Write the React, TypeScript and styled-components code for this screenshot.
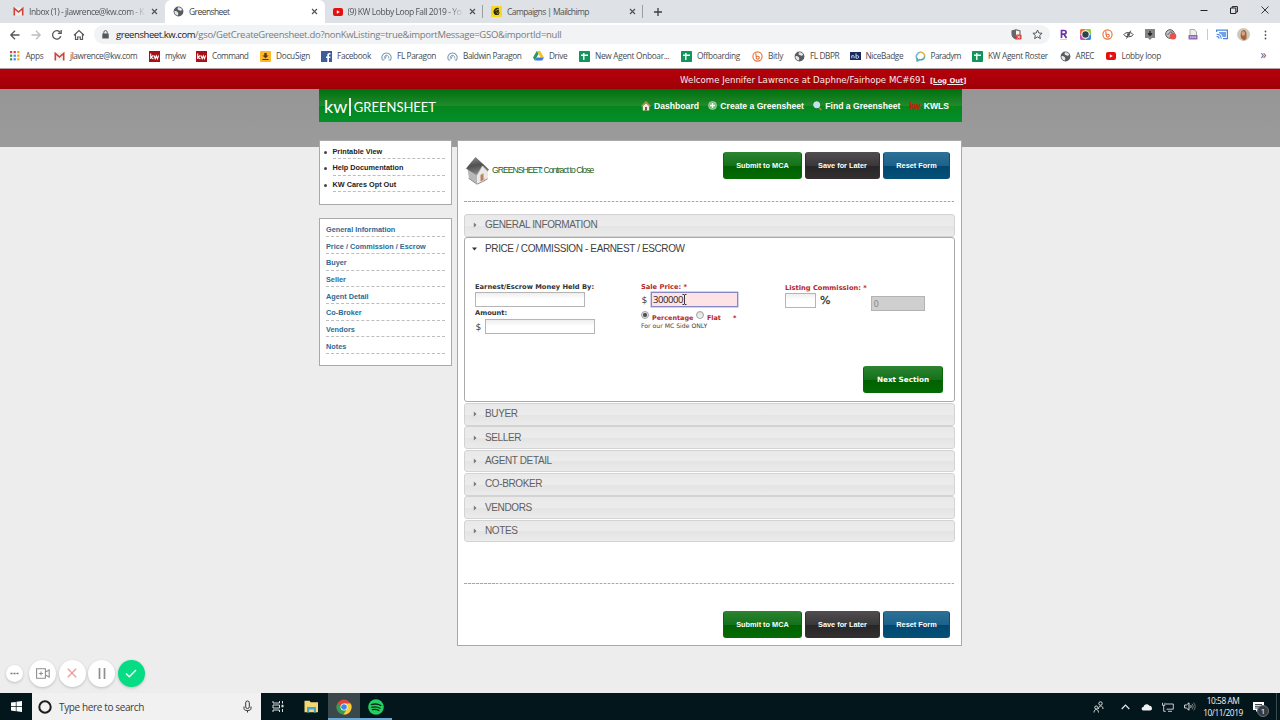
import React from 'react';
import styled, { createGlobalStyle, css } from 'styled-components';

const UI = "'Open Sans', 'Noto Sans', sans-serif";
const ARIAL = "'Liberation Sans', Arial, sans-serif";
const VERDANA = "'DejaVu Sans', Verdana, sans-serif";

const Global = createGlobalStyle`
  * { box-sizing: border-box; }
  html, body { margin: 0; padding: 0; }
  body { width: 1280px; height: 720px; overflow: hidden; background: #ededed; font-family: ${ARIAL}; }
  a { color: inherit; text-decoration: none; }
  svg { display: block; flex: none; }
`;

/* ---------- window frame ---------- */
const Screen = styled.div`
  width: 1280px; height: 720px; display: flex; flex-direction: column; overflow: hidden; position: relative;
`;
const TabStrip = styled.div`
  height: 23px; flex: none; display: flex; background: #dee1e6; font-family: ${UI};
`;
const Tab = styled.div<{ $w: number; $pad?: number; $active?: boolean; $sep?: boolean }>`
  width: ${p => p.$w}px; height: 23px; display: flex; align-items: center; padding: 0 7px 0 ${p => p.$pad ?? 8}px; gap: 5px;
  color: ${p => (p.$active ? '#3f4247' : '#505458')};
  position: relative;
  ${p => p.$active && css`background: #fff; border-radius: 6px 6px 0 0;`}
  ${p => p.$sep && css`&::after { content: ''; position: absolute; right: 0; top: 5px; height: 13px; width: 1px; background: #9a9da2; }`}
`;
const TabTitle = styled.span<{ $ls: number; $fade?: boolean }>`
  flex: 1; font-size: 8.5px; line-height: 12px; letter-spacing: ${p => p.$ls}px; white-space: nowrap;
  ${p => p.$fade && css`-webkit-mask-image: linear-gradient(90deg, #000 calc(100% - 16px), transparent);`}
`;
const WindowButtons = styled.div`
  margin-left: auto; display: flex; align-items: center; gap: 22.5px; padding: 0 11.5px 4px 0;
`;
const Toolbar = styled.div`
  height: 23px; flex: none; display: flex; align-items: center; background: #fff; font-family: ${UI};
`;
const NavIcons = styled.div`
  width: 94px; flex: none; display: flex; gap: 9.4px; padding-left: 8.5px;
`;
const Omnibox = styled.div`
  width: 956px; height: 19px; flex: none; border-radius: 10px; background: #f1f3f4; display: flex; align-items: center; padding: 0 7px 0 8px;
`;
const Url = styled.span`
  margin-left: 7px; flex: 1; font-size: 9.5px; line-height: 14px; color: #777c80; white-space: nowrap; letter-spacing: -0.28px;
  b { font-weight: 400; color: #202124; letter-spacing: -0.43px; }
`;
const OmniIcons = styled.div`display: flex; gap: 10px;`;
const Extensions = styled.div`flex: 1; display: flex; align-items: center; padding-left: 3.6px;`;
const ExtSlot = styled.span<{ $narrow?: boolean }>`
  width: ${p => (p.$narrow ? 8.4 : 21.4)}px; flex: none; display: flex; justify-content: center;
`;
const ExtDivider = styled.span`width: 1px; height: 11px; background: #c8cacc;`;
const Bookmarks = styled.div`
  height: 22px; flex: none; display: flex; align-items: center; background: #fff; padding: 0 0 2px 9.5px; font-family: ${UI};
`;
const Bookmark = styled.a<{ $w: number }>`
  width: ${p => p.$w}px; flex: none; display: flex; align-items: center; white-space: nowrap; color: #484b4f;
`;
const BookmarkIcon = styled.span`width: 16px; flex: none; display: flex;`;
const BookmarkText = styled.span<{ $ls: number }>`font-size: 8.3px; line-height: 12px; letter-spacing: ${p => p.$ls}px;`;
const MoreMark = styled.span`font-size: 12px; line-height: 12px; color: #55585c; padding-bottom: 2px;`;

/* ---------- site ---------- */
const Page = styled.div`
  height: 625px; flex: none; background: linear-gradient(#949494, #9b9b9b) 0 0 / 100% 78px no-repeat #ededed;
  border-top: 1px solid #b0a3a3;
`;
const WelcomeBar = styled.div`
  height: 20px; background: linear-gradient(#7d1515 0 1px, #b4000a 1px, #a00008); display: flex; justify-content: flex-end; align-items: center; padding: 2px 313.5px 0 0;
  font-family: ${VERDANA}; color: #f8eaea; white-space: nowrap;
`;
const Welcome = styled.span`font-size: 8.6px; line-height: 12px;`;
const LogOut = styled.a`font-size: 6.85px; line-height: 12px; font-weight: 700; margin-left: 4px; padding-top: 1px; span { text-decoration: underline; }`;
const Container = styled.div`width: 643px; margin-left: 319px;`;
const Header = styled.div`
  height: 33px; display: flex; align-items: center; justify-content: space-between; padding: 0 13px 0 5px; color: #fff;
  background: linear-gradient(#00700e 0, #1f8a2c 50%, #06841c 51%, #039029 100%);
`;
const Logo = styled.div`
  display: flex; align-items: center; font-family: Lato, sans-serif; white-space: nowrap; color: #fff; padding-top: 1px;
`;
const LogoKw = styled.span`font-size: 18px; line-height: 20px;`;
const LogoBar = styled.span`width: 1.5px; height: 18px; background: #e8f3e8; margin: 2px 3px 0 2px;`;
const LogoName = styled.span`font-size: 13px; line-height: 20px; padding-top: 2px;`;
const HeaderNav = styled.div`display: flex; align-items: center; gap: 9.2px;`;
const HeaderLink = styled.a`
  display: flex; align-items: center; gap: 3.2px; font-size: 8.6px; line-height: 12px; font-weight: 700; white-space: nowrap;
`;
const KwTiny = styled.span`color: #c4200c; font-size: 8.5px; width: 11px; letter-spacing: -0.5px; text-shadow: 0 0 1px #b3260c;`;
const Columns = styled.div`display: flex; align-items: flex-start; gap: 5px; margin-top: 18px;`;
const Side = styled.div`width: 133px; flex: none; display: flex; flex-direction: column; gap: 13px;`;
const SidePanel = styled.div<{ $h: number; $links?: boolean }>`
  height: ${p => p.$h}px; background: #fff; border: 1px solid #a9a9a9; padding: ${p => (p.$links ? '1.8px 6px 0 6px' : '1.5px 6px 0 12.5px')};
  color: ${p => (p.$links ? '#2d6a94' : '#222')};
`;
const SideItem = styled.a<{ $bullet?: boolean }>`
  height: 16.65px; display: flex; align-items: center; font-size: 7.3px; line-height: 10px; font-weight: 700; white-space: nowrap; position: relative;
  border-bottom: 1px dashed #bdbdbd; padding-top: 3px;
  ${p => p.$bullet && css`&::before { content: ''; position: absolute; left: -9px; top: 8px; width: 3px; height: 3px; border-radius: 50%; background: #444; }`}
`;
const Main = styled.div`
  width: 505px; height: 506px; background: #fff; border: 1px solid #a9a9a9; padding: 0 6px 0 6px; display: flex; flex-direction: column;
`;
const TitleRow = styled.div`height: 60px; flex: none; display: flex; align-items: center; padding: 0 5px 11px 2px;`;
const FormTitle = styled.h1`
  margin: 9px 0 0 3px; flex: 1; font-size: 8.6px; line-height: 12px; font-weight: 400; letter-spacing: -0.97px; color: #17601c; white-space: nowrap;
`;
const HouseMark = styled.span`margin-top: 10px;`;
const Buttons = styled.div`display: flex; gap: 3px;`;
const tones = {
  green: ['#2b8230', '#14721a', '#006000', '#046b04'],
  dark: ['#4f4b4e', '#3b383a', '#272526', '#332f31'],
  blue: ['#2c7096', '#1c628c', '#00476f', '#055077'],
};
const Button = styled.button<{ $tone: keyof typeof tones; $w: number; $verdana?: boolean }>`
  width: ${p => p.$w}px; height: 27px; padding: 0; border: 1px solid ${p => tones[p.$tone][3]}; border-top-color: ${p => tones[p.$tone][0]}; border-radius: 3px;
  background: linear-gradient(${p => tones[p.$tone][0]}, ${p => tones[p.$tone][1]} 50%, ${p => tones[p.$tone][2]} 52%, ${p => tones[p.$tone][3]});
  color: #fff; font-weight: 700; font-family: ${p => (p.$verdana ? VERDANA : ARIAL)}; font-size: ${p => (p.$verdana ? 7.25 : 7.35)}px; line-height: 10px; white-space: nowrap;
`;
const Rule = styled.div`height: 1px; flex: none; margin-right: 1px; background: repeating-linear-gradient(90deg, #a5a5a5 0 2.5px, #e8e8e8 2.5px 4px);`;
const Accordion = styled.div`height: 381px; flex: none; padding-top: 12px;`;
const Section = styled.div`
  height: 22.6px; margin-bottom: 0.75px; border: 1px solid #d3d3d3; border-radius: 3px; display: flex; align-items: center; padding-left: 7px;
  background: linear-gradient(#e9e9e9, #ececec 50%, #e4e4e4 52%, #ebebeb); color: #606060;
`;
const OpenSection = styled.div`
  height: 165px; margin: 0.5px 0 0.6px; border: 1px solid #aaa; border-radius: 3px; background: #fff; display: flex; flex-direction: column;
`;
const OpenHead = styled.div`height: 21px; flex: none; display: flex; align-items: center; padding-left: 7px; color: #404040;`;
const SectionTitle = styled.span`font-size: 10px; letter-spacing: -0.38px; line-height: 12px; margin-left: 8px; white-space: nowrap;`;
const Fields = styled.div`
  height: 107px; flex: none; display: grid; grid-template-columns: 166px 144px 86px 60px; padding: 22px 0 0 10px; align-items: start;
`;
const Field = styled.div<{ $top?: number }>`display: flex; flex-direction: column; align-items: flex-start; padding-top: ${p => p.$top ?? 0}px;`;
const Label = styled.label<{ $req?: boolean; $h?: number }>`
  font-family: ${VERDANA}; font-weight: 700; font-size: 6.7px; line-height: ${p => (p.$h ?? 11) + 1.5}px; height: ${p => p.$h ?? 11}px; white-space: nowrap;
  color: ${p => (p.$req ? '#b4262a' : '#333')};
`;
const InputRow = styled.div`display: flex; align-items: center; height: 15px; font-family: ${VERDANA}; color: #333;`;
const Sign = styled.span`font-size: 9px; width: 9.5px; line-height: 12px; padding-left: .5px;`;
const Percent = styled.span`font-size: 11px; line-height: 12px; margin-left: 4px; -webkit-text-stroke: .3px #333;`;
const Box = styled.span<{ $w: number; $kind?: 'focus' | 'off' }>`
  width: ${p => p.$w}px; height: 15px; display: flex; align-items: center; padding-left: 1.5px; border: 1px solid #b5b5b5; font-family: ${UI}; font-size: 9.5px; line-height: 12px; color: #333;
  background: linear-gradient(#eee, #fff 45%);
  position: relative;
  ${p => p.$kind === 'focus' && css`background: #fde3e3; border-color: #8787c8; color: #2c2024; letter-spacing: -0.43px; box-shadow: 0 0 0 .5px #a5a5d8;`}
  ${p => p.$kind === 'off' && css`background: #cfcfcf; border-color: #b3b3b3; color: #8a8a8a; font-family: ${VERDANA}; font-size: 8.5px;`}
`;
const Cursor = styled.span`position: absolute; left: 30px; top: 1px;`;
const RadioRow = styled.div`display: flex; align-items: center; height: 10px; margin-top: 4px; width: 100px;`;
const Radio = styled.span<{ $on?: boolean; $l?: number }>`
  width: 8px; height: 8px; flex: none; border-radius: 50%; border: 1px solid #a2a2a2; background: ${p => (p.$on ? 'radial-gradient(#555 0 1.8px, #e6e6e6 2.4px)' : 'linear-gradient(#ddd, #f4f4f4)')}; margin: 0 0 3px ${p => p.$l ?? 0}px;
`;
const RadioText = styled.span<{ $l: number }>`
  font-family: ${VERDANA}; font-weight: 700; font-size: 6.45px; line-height: 10px; color: #b4262a; margin: 3px 0 0 ${p => p.$l}px; white-space: nowrap;
`;
const Hint = styled.span`font-family: ${VERDANA}; font-size: 6.15px; line-height: 9px; color: #444; white-space: nowrap;`;
const NextRow = styled.div`display: flex; justify-content: flex-end; padding-right: 11px;`;
const BottomButtons = styled.div`display: flex; justify-content: flex-end; padding: 27px 5px 0 0;`;

/* ---------- recorder + taskbar ---------- */
const Recorder = styled.div`position: absolute; left: 6px; top: 659.5px; display: flex; align-items: center; gap: 1.4px;`;
const Round = styled.span<{ $s: number; $go?: boolean }>`
  width: ${p => p.$s}px; height: ${p => p.$s}px; border-radius: 50%; display: flex; align-items: center; justify-content: center;
  background: ${p => (p.$go ? '#05dc84' : '#fff')}; margin: 0 1px 0 0; box-shadow: 0 1px 3px rgba(0,0,0,.2);
  &:first-child { margin-right: 5px; }
`;
const Taskbar = styled.div`height: 27px; flex: none; background: #03161b; display: flex; font-family: ${UI};`;
const Task = styled.span<{ $w: number; $active?: boolean; $run?: boolean }>`
  width: ${p => p.$w}px; height: 27px; flex: none; display: flex; align-items: center; justify-content: center;
  background: ${p => (p.$active ? '#3a484c' : 'transparent')};
  ${p => p.$run && css`border-bottom: 2px solid #6aa9d6; padding-top: 2px;`}
`;
const Search = styled.div`
  width: 229px; flex: none; background: #f1f1f1; display: flex; align-items: center; padding: 0 9px 0 6px; font-size: 10px; letter-spacing: -0.37px; color: #3c3c3c;
  span { flex: 1; margin-left: 7px; white-space: nowrap; line-height: 14px; }
`;
const Tray = styled.div`margin-left: auto; display: flex; align-items: center; padding-right: 3px; color: #fff;`;
const Slot = styled.span<{ $w: number }>`width: ${p => p.$w}px; display: flex; justify-content: center; position: relative;`;
const Clock = styled.div`
  width: 50px; font-size: 8.3px; line-height: 12px; text-align: center; color: #f2f2f2; white-space: nowrap; letter-spacing: -0.45px;
`;
const CountBadge = styled.span`
  position: absolute; left: 9px; top: 3px; width: 12px; height: 12px; border-radius: 50%; background: #343b3e; border: 1px solid #6b7275; font-size: 8px; line-height: 10px; text-align: center; color: #fff;
`;
const ShowDesktop = styled.span`width: 1px; height: 27px; margin-left: 8px; background: #3b4a4e;`;

/* ---------- icons ---------- */
const Gmail = () => (
  <svg width="11" height="9" viewBox="0 0 11 9"><path d="M1 0.5h9v8H1z" fill="#f3efef" /><path d="M1.3 8.5V1.4L5.5 5l4.2-3.6v7.1" fill="none" stroke="#c9453a" strokeWidth="1.6" /></svg>
);
const Globe = () => (
  <svg width="11" height="11" viewBox="0 0 11 11"><circle cx="5.5" cy="5.5" r="4.9" fill="#585c60" /><path d="M1.4 5.2c1.5-.6 2.6.2 3.4 1 .8.9.4 2 .1 3.3C2.6 9.3 1.3 7.5 1.4 5.2zM5 1.4c1.6-.5 3.6.7 4.3 2.5-1 .5-2 1.2-3 .4C5.3 3.6 3.8 3.3 5 1.4z" fill="#e4e6e8" /></svg>
);
const YouTube = () => (
  <svg width="10" height="8" viewBox="0 0 10 8"><rect width="10" height="8" rx="2" fill="#e60f0f" /><path d="M3.8 2.3v3.4L6.8 4z" fill="#fff" /></svg>
);
const Chimp = () => (
  <svg width="11" height="11" viewBox="0 0 11 11"><rect width="11" height="11" rx="1" fill="#f5da1d" /><path d="M7.9 2.2C5.400 1 2.500 2.900 2.500 5.900c0 2.900 2.900 4 5.400 2.600l.8-1.900-1-.5.6-1.500-.9-.9z" fill="#2e2a1e" /><path d="M4.900 5.200c.2-1.300 1.200-1.900 2.400-1.500M5.600 6.800c.7.600 1.300.5 2 0" stroke="#f5da1d" fill="none" strokeWidth=".8" /></svg>
);
const Close = () => (
  <svg width="7" height="7" viewBox="0 0 7 7"><path d="M1 1l5 5M6 1L1 6" stroke="#4d5156" strokeWidth="1.1" /></svg>
);
const KwIcon = () => (
  <svg width="11" height="11" viewBox="0 0 11 11"><rect width="11" height="11" fill="#a80f16" /><path d="M1.700 2.500v5.500M4.300 4.500L2 6.100 4.400 8M5 4.500l1.200 3.200 1.100-2.900 1.100 2.900 1.200-3.200" stroke="#fff" fill="none" strokeWidth="1.100" /></svg>
);
const dotColors = ['#db4437', '#db4437', '#f0a020', '#3f8f58', '#4285f4', '#f0a020', '#3f8f58', '#4285f4', '#e8b020'];
const AppsIcon = () => (
  <svg width="10" height="10" viewBox="0 0 10 10">
    {dotColors.map((c, i) => <rect key={i} x={(i % 3) * 3.6} y={Math.floor(i / 3) * 3.6} width="2.2" height="2.2" fill={c} />)}
  </svg>
);
const DocuSign = () => (
  <svg width="11" height="11" viewBox="0 0 11 11"><rect width="11" height="11" rx="1" fill="#fbb829" /><path d="M4.300 2h2.400v2.600H8.600L5.500 7.200 2.400 4.600h1.900zM2.400 8h6.200v1H2.400z" fill="#5a3410" /></svg>
);
const Facebook = () => (
  <svg width="11" height="11" viewBox="0 0 11 11"><rect width="11" height="11" fill="#3f5b9a" /><path d="M6.300 11V7H5V5.400h1.300V4.200C6.300 2.800 7 2 8.300 2h1.200v1.600h-.8c-.5 0-.7.200-.7.700v1.100h1.500L9.300 7H8v4z" fill="#fff" /></svg>
);
const Paragon = () => (
  <svg width="11" height="9" viewBox="0 0 11 9"><path d="M1.500 8C-.3 4.500 2 1 5.500 1S11.300 4.500 9.500 8L7.600 8M1.500 8h2" fill="none" stroke="#75a3b0" strokeWidth="1.1" /><path d="M3.300 6.500C3 4.600 4 3.300 5.500 3.300s2.500 1.300 2.200 3.200M5.500 3.500L4 7" fill="none" stroke="#7d8fa6" strokeWidth=".9" /></svg>
);
const Drive = () => (
  <svg width="11" height="10" viewBox="0 0 11 10"><path d="M3.800 0h3.400L11 6.500H7.600z" fill="#f2c230" /><path d="M3.800 0L0 6.500 1.800 9.600 5.500 3z" fill="#269b60" /><path d="M3.600 6.500H11L9.200 9.600H1.800z" fill="#4179dd" /></svg>
);
const Sheet = () => (
  <svg width="11" height="11" viewBox="0 0 11 11"><rect width="11" height="11" rx=".8" fill="#12955b" /><path d="M2 4.200h7M4.800 2v7" stroke="#fff" strokeWidth="1.4" /></svg>
);
const BitlyIcon = () => (
  <svg width="11" height="11" viewBox="0 0 11 11"><circle cx="5.5" cy="5.5" r="4.6" fill="#fff" stroke="#e5703b" strokeWidth="1.1" /><path d="M3.800 2.300l.6 5.200M4.200 6.300c.7-1.500 3.200-1.400 3.100.4-.1 1.700-2.300 1.800-2.900.6" fill="none" stroke="#e5703b" strokeWidth="1.1" /></svg>
);
const NiceBadge = () => (
  <svg width="11" height="8" viewBox="0 0 11 8"><rect width="11" height="8" fill="#172b5f" /><path d="M1.800 6.300V3.500M1.800 4.200c.6-1 2.300-.9 2.300.3v1.800M6 1.300v5M6 4.200c.8-1 2.700-.7 2.700.7S6.800 6.800 6 5.800" stroke="#dfe5f2" fill="none" strokeWidth=".9" /></svg>
);
const ParadymIcon = () => (
  <svg width="11" height="11" viewBox="0 0 11 11"><path d="M2 8.500C.2 5 2.300 1.300 5.500 1.300" fill="none" stroke="#6fb6d8" strokeWidth="1.6" /><path d="M5 1.300c3-.3 5 2 4.600 4.500" fill="none" stroke="#e0b83c" strokeWidth="1.6" /><path d="M9.600 5.500C9.300 8 7 9.300 4.700 8.600L2.200 10V7" fill="none" stroke="#45a9a8" strokeWidth="1.5" /></svg>
);
const House = () => (
  <svg width="10" height="10" viewBox="0 0 10 10"><path d="M1.800 5v4.500h6.400V5L5 2.200z" fill="#efe9e0" /><path d="M.5 5.500L5 1l4.500 4.500" stroke="#c48a5a" strokeWidth="1.3" fill="none" /><path d="M4 6h2v3.500H4z" fill="#7d5a3c" /></svg>
);
const Plus = () => (
  <svg width="9" height="9" viewBox="0 0 9 9"><circle cx="4.5" cy="4.5" r="4" fill="#78b878" stroke="#b5dcb5" strokeWidth=".7" /><path d="M4.500 2v5M2 4.500h5" stroke="#fff" strokeWidth="1.4" /></svg>
);
const Lens = () => (
  <svg width="9" height="10" viewBox="0 0 9 10"><path d="M5.500 6l2.800 3" stroke="#b98245" strokeWidth="1.6" /><circle cx="3.7" cy="3.8" r="3" fill="#bfe0f7" stroke="#d4e6ee" strokeWidth="1" /></svg>
);
const BigHouse = () => (
  <svg width="23" height="28" viewBox="0 0 23 28">
    <defs><linearGradient id="roof" x1=".3" y1="0" x2=".5" y2="1"><stop offset="0" stopColor="#8a8a8a" /><stop offset=".45" stopColor="#505050" /><stop offset="1" stopColor="#8e8e8e" /></linearGradient></defs>
    <path d="M1.500 12L3 21.500 11 27V17z" fill="#b8b8b8" /><path d="M11 17l6-9 5 6v8L11 27z" fill="#ebe8e5" />
    <path d="M9.500 0L0 11.500l11 7L16.500 9l5 5.500 1.500-2z" fill="url(#roof)" />
    <path d="M11 18L16.500 9l4.700 5" fill="none" stroke="#cfcfcf" strokeWidth=".8" />
    <path d="M14.500 18l3-1.700v6.700l-3 1.500z" fill="#b9805a" /><path d="M17 18l1.500 5.500" stroke="#e3b48e" strokeWidth="1" /><path d="M2.500 21.200l8.500 6 6-2.700 4.500-2.700" stroke="#777" strokeWidth=".8" fill="none" />
  </svg>
);
const Caret = ({ open }: { open?: boolean }) => (
  <svg width="5" height="6" viewBox="0 0 5 6"><path d={open ? 'M0 1.500h5L2.500 4.500z' : 'M1.800 .5v5l2.700-2.500z'} fill={open ? '#333' : '#777'} /></svg>
);

const bookmarks: [string, number, () => React.ReactElement, number][] = [
  ['Apps', 44.5, AppsIcon, -0.42], ['jlawrence@kw.com', 95, Gmail, -0.42], ['mykw', 47, KwIcon, -0.5], ['Command', 64, KwIcon, -0.58],
  ['DocuSign', 61, DocuSign, -0.29], ['Facebook', 60, Facebook, -0.37], ['FL Paragon', 66, Paragon, -0.4], ['Baldwin Paragon', 86, Paragon, -0.44],
  ['Drive', 46, Drive, -0.4], ['New Agent Onboar...', 102, Sheet, -0.31], ['Offboarding', 71, Sheet, -0.37], ['Bitly', 42, BitlyIcon, -0.34],
  ['FL DBPR', 55.5, Globe, -0.43], ['NiceBadge', 65, NiceBadge, -0.38], ['Paradym', 57.5, ParadymIcon, -0.58], ['KW Agent Roster', 87.5, Sheet, -0.31],
  ['AREC', 46, Globe, -0.37], ['Lobby loop', 155, YouTube, -0.35],
];

const extensionIcons = [
  <svg width="10" height="11" viewBox="0 0 10 11"><path d="M2.500 9V1.500h2.700c2.500 0 2.500 3.700 0 3.700H3M5 5.200L7.500 9" fill="none" stroke="#6a32a8" strokeWidth="1.7" /><path d="M1 10.500h7" stroke="#c9b6dc" strokeWidth=".7" /></svg>,
  <svg width="11" height="11" viewBox="0 0 11 11"><path d="M1 0h4.500v5.500H0V1z" fill="#f0733c" /><path d="M5.500 0H10l1 1v4.500H5.500z" fill="#9acb3c" /><path d="M0 5.500h5.500V11H1l-1-1z" fill="#c850b8" /><path d="M5.500 5.500H11V10l-1 1H5.500z" fill="#3889d9" /><circle cx="5.5" cy="5.5" r="4.2" fill="#fff" /><circle cx="5.5" cy="5.5" r="3.2" fill="#2e4446" /></svg>,
  <BitlyIcon />,
  <svg width="11" height="11" viewBox="0 0 11 11"><path d="M.8 5.700C2.500 2.800 8.500 2.800 10.200 5.700 8.500 8.400 2.500 8.400.8 5.700zM7.700 1.700L3.500 9.500" fill="none" stroke="#444" strokeWidth="1" /><circle cx="5.5" cy="5.5" r="1.5" fill="#555" /></svg>,
  <svg width="10" height="11" viewBox="0 0 10 11"><rect width="10" height="9" fill="#858585" /><path d="M3 9h4l-2 2z" fill="#858585" /><path d="M5 2v4M3 4.200L5 6.300l2-2.100" stroke="#222" strokeWidth="1.3" fill="none" /></svg>,
  <svg width="12" height="11" viewBox="0 0 12 11"><circle cx="5" cy="5" r="4.3" fill="#c3c6ca" stroke="#555" strokeWidth="1" /><path d="M2.500 6l3.500-3.500L8 5" stroke="#555" fill="none" /><circle cx="8" cy="7.3" r="3.3" fill="#e8534d" /></svg>,
  <svg width="10" height="11" viewBox="0 0 10 11"><path d="M2 .5h4.500L8.500 3v5H2z" fill="#eee" stroke="#999" strokeWidth=".8" /><rect x=".5" y="6" width="9" height="4.5" rx=".6" fill="#8f6ab0" /><path d="M2 8.200h6" stroke="#e4d8ee" strokeWidth="1.3" strokeDasharray="1.5 .7" /></svg>,
];

const ActionButtons = () => (
  <Buttons>
    <Button $tone="green" $w={79}>Submit to MCA</Button>
    <Button $tone="dark" $w={75}>Save for Later</Button>
    <Button $tone="blue" $w={67}>Reset Form</Button>
  </Buttons>
);

export default function App() {
  return (
    <Screen>
      <Global />
      <TabStrip>
        <Tab $w={165} $pad={13}><Gmail /><TabTitle $fade $ls={-0.46}>Inbox (1) - jlawrence@kw.com - K</TabTitle><Close /></Tab>
        <Tab $w={160} $active><Globe /><TabTitle $ls={-0.58}>Greensheet</TabTitle><Close /></Tab>
        <Tab $w={158} $pad={7.5} $sep><YouTube /><TabTitle $fade $ls={-0.44}>(9) KW Lobby Loop Fall 2019 - Yo</TabTitle><Close /></Tab>
        <Tab $w={160} $sep><Chimp /><TabTitle $ls={-0.58}>Campaigns | Mailchimp</TabTitle><Close /></Tab>
        <Tab $w={30} $pad={11}><svg width="8" height="8" viewBox="0 0 8 8"><path d="M4 0v8M0 4h8" stroke="#3c4043" strokeWidth="1.3" /></svg></Tab>
        <WindowButtons>
          <svg width="8" height="8" viewBox="0 0 8 8"><path d="M.5 4.500h7" stroke="#222" strokeWidth="1" /></svg>
          <svg width="8" height="8" viewBox="0 0 8 8"><path d="M.5 2h5.300v5.500H.5zM2.200 2V.6h5.200V6H6" fill="none" stroke="#222" strokeWidth="1" /></svg>
          <svg width="8" height="8" viewBox="0 0 8 8"><path d="M.5.5l7 7M7.500.5l-7 7" stroke="#222" strokeWidth=".9" /></svg>
        </WindowButtons>
      </TabStrip>
      <Toolbar>
        <NavIcons>
          <svg width="12" height="12" viewBox="0 0 12 12"><path d="M10.500 6H2M6 1.800L1.800 6 6 10.200" fill="none" stroke="#55585c" strokeWidth="1.3" /></svg>
          <svg width="12" height="12" viewBox="0 0 12 12"><path d="M1.500 6H10M6 1.800L10.200 6 6 10.200" fill="none" stroke="#bcbfc2" strokeWidth="1.3" /></svg>
          <svg width="12" height="12" viewBox="0 0 12 12"><path d="M9.800 7.200A4.200 4.200 0 1 1 9.200 3.400M10.200 1v3.300H6.900" fill="none" stroke="#55585c" strokeWidth="1.3" /></svg>
          <svg width="12" height="12" viewBox="0 0 12 12"><path d="M1 6.200L6 1.500l5 4.700M2.500 5.500v5H4.700V8h2.600v2.500h2.200v-5" fill="none" stroke="#55585c" strokeWidth="1.2" /></svg>
        </NavIcons>
        <Omnibox>
          <svg width="7" height="9" viewBox="0 0 7 9"><path d="M.3 3.500h6.400v5H.3z" fill="#55585c" /><path d="M1.800 3.800V2.300a1.700 1.700 0 0 1 3.400 0v1.500" fill="none" stroke="#55585c" strokeWidth="1" /></svg>
          <Url><b>greensheet.kw.com</b>/gso/GetCreateGreensheet.do?nonKwListing=true&amp;importMessage=GSO&amp;importId=null</Url>
          <OmniIcons>
            <svg width="11" height="11" viewBox="0 0 11 11"><path d="M5 .8L9 2v3c0 2.500-1.500 4-4 5-2.500-1-4-2.500-4-5V2z" fill="none" stroke="#666" strokeWidth="1.1" /><path d="M5 .8V10C2.500 9 1 7.500 1 5V2z" fill="#666" /><rect x="5" y="5.5" width="5.5" height="5" rx="1" fill="#d9453d" /><path d="M6.500 6.900l2.400 2.300M8.900 6.900L6.500 9.200" stroke="#fff" strokeWidth=".8" /></svg>
            <svg width="11" height="11" viewBox="0 0 11 11"><path d="M5.500 1l1.300 3 3.300.3-2.500 2.100.8 3.200-2.900-1.700-2.900 1.700.8-3.200L.9 4.300 4.200 4z" fill="none" stroke="#55585c" strokeWidth="1" /></svg>
          </OmniIcons>
        </Omnibox>
        <Extensions>
          {extensionIcons.map((icon, i) => <ExtSlot key={i}>{icon}</ExtSlot>)}
          <ExtSlot $narrow><ExtDivider /></ExtSlot>
          <ExtSlot><svg width="12" height="11" viewBox="0 0 12 11"><path d="M.6 3V1.200h10.800v8.500H7" fill="none" stroke="#4a86e0" strokeWidth="1.2" /><path d="M3 3h7v5H6.500C6 6 4.500 4.600 3 4.300z" fill="#6fa3ee" /><path d="M.6 5.200c2.700 0 4.600 1.900 4.600 4.600M.6 7.400c1.500 0 2.400 1 2.400 2.400" fill="none" stroke="#4a86e0" strokeWidth="1.1" /></svg></ExtSlot>
          <ExtSlot><svg width="13" height="13" viewBox="0 0 13 13"><circle cx="6.5" cy="6.5" r="6.5" fill="#cfc8b8" /><path d="M4 10c-1-4 .3-8 2.700-8S10 5 9.300 11l-2.500 1.500z" fill="#a5633b" /><ellipse cx="6.3" cy="5.5" rx="1.7" ry="2.3" fill="#dba583" /></svg></ExtSlot>
          <ExtSlot><svg width="3" height="10" viewBox="0 0 3 10"><circle cx="1.5" cy="1.5" r=".9" fill="#555" /><circle cx="1.5" cy="5" r=".9" fill="#555" /><circle cx="1.5" cy="8.5" r=".9" fill="#555" /></svg></ExtSlot>
        </Extensions>
      </Toolbar>
      <Bookmarks>
        {bookmarks.map(([name, w, Icon, ls]) => (
          <Bookmark key={name} $w={w}><BookmarkIcon><Icon /></BookmarkIcon><BookmarkText $ls={ls}>{name}</BookmarkText></Bookmark>
        ))}
        <MoreMark>»</MoreMark>
      </Bookmarks>

      <Page>
        <WelcomeBar>
          <Welcome>Welcome Jennifer Lawrence at Daphne/Fairhope MC#691</Welcome>
          <LogOut>[<span>Log Out</span>]</LogOut>
        </WelcomeBar>
        <Container>
          <Header>
            <Logo><LogoKw>kw</LogoKw><LogoBar /><LogoName>GREENSHEET</LogoName></Logo>
            <HeaderNav>
              <HeaderLink><House />Dashboard</HeaderLink>
              <HeaderLink><Plus />Create a Greensheet</HeaderLink>
              <HeaderLink><Lens />Find a Greensheet</HeaderLink>
              <HeaderLink><KwTiny>kw</KwTiny>KWLS</HeaderLink>
            </HeaderNav>
          </Header>
          <Columns>
            <Side>
              <SidePanel $h={65}>
                {['Printable View', 'Help Documentation', 'KW Cares Opt Out'].map(t => <SideItem key={t} $bullet>{t}</SideItem>)}
              </SidePanel>
              <SidePanel $h={148} $links>
                {['General Information', 'Price / Commission / Escrow', 'Buyer', 'Seller', 'Agent Detail', 'Co-Broker', 'Vendors', 'Notes'].map(t => <SideItem key={t}>{t}</SideItem>)}
              </SidePanel>
            </Side>
            <Main>
              <TitleRow><HouseMark><BigHouse /></HouseMark><FormTitle>GREENSHEET: Contract to Close</FormTitle><ActionButtons /></TitleRow>
              <Rule />
              <Accordion>
                <Section><Caret /><SectionTitle>GENERAL INFORMATION</SectionTitle></Section>
                <OpenSection>
                  <OpenHead><Caret open /><SectionTitle>PRICE / COMMISSION - EARNEST / ESCROW</SectionTitle></OpenHead>
                  <Fields>
                    <Field>
                      <Label>Earnest/Escrow Money Held By:</Label>
                      <InputRow><Box $w={110} /></InputRow>
                      <Label $h={12}>Amount:</Label>
                      <InputRow><Sign>$</Sign><Box $w={110} /></InputRow>
                    </Field>
                    <Field>
                      <Label $req>Sale Price: *</Label>
                      <InputRow><Sign>$</Sign><Box $w={87} $kind="focus">300000
                        <Cursor><svg width="5" height="11" viewBox="0 0 5 11"><path d="M.5.5h1.500l.5.500.5-.5h1.500M2.500 1v9M.5 10.500h1.500l.5-.5.5.5h1.500" fill="none" stroke="#222" strokeWidth=".9" /></svg></Cursor></Box></InputRow>
                      <RadioRow><Radio $on /><RadioText $l={3}>Percentage</RadioText><Radio $l={2.5} /><RadioText $l={3}>Flat</RadioText><RadioText $l={12}>*</RadioText></RadioRow>
                      <Hint>For our MC Side ONLY</Hint>
                    </Field>
                    <Field $top={1}>
                      <Label $req>Listing Commission: *</Label>
                      <InputRow><Box $w={31} /><Percent>%</Percent></InputRow>
                    </Field>
                    <Field $top={15}><Box $w={54} $kind="off">0</Box></Field>
                  </Fields>
                  <NextRow><Button $tone="green" $w={80} $verdana>Next Section</Button></NextRow>
                </OpenSection>
                {['BUYER', 'SELLER', 'AGENT DETAIL', 'CO-BROKER', 'VENDORS', 'NOTES'].map(t => <Section key={t}><Caret /><SectionTitle>{t}</SectionTitle></Section>)}
              </Accordion>
              <Rule />
              <BottomButtons><ActionButtons /></BottomButtons>
            </Main>
          </Columns>
        </Container>
      </Page>

      <Taskbar>
        <Task $w={32}><svg width="11" height="11" viewBox="0 0 11 11"><path d="M0 1.500L4.800.9v4.300H0zM5.500.8L11 0v5.200H5.500zM0 5.900h4.800v4.300L0 9.600zM5.500 5.900H11V11l-5.500-.8z" fill="#fff" /></svg></Task>
        <Search>
          <svg width="14" height="14" viewBox="0 0 14 14"><circle cx="7" cy="7" r="5.7" fill="none" stroke="#1c1c1c" strokeWidth="2" /></svg>
          <span>Type here to search</span>
          <svg width="9" height="13" viewBox="0 0 9 13"><rect x="2.7" y="1" width="3.6" height="7.5" rx="1.7" fill="none" stroke="#333" strokeWidth="1" /><path d="M1 6.500v2c0 1.200 1 2 3.500 2s3.500-.8 3.500-2v-2M4.500 10.500v2" fill="none" stroke="#333" strokeWidth="1" /></svg>
        </Search>
        <Task $w={33}><svg width="12" height="11" viewBox="0 0 12 11"><path d="M1 0v2h6.500V0M1 4h6.500v3H1zM1 11V9h6.500v2M10.500 0v2.500M10.500 8v3" fill="none" stroke="#ddd" strokeWidth="1" /><rect x="9.5" y="3.8" width="2" height="2.5" fill="#ddd" /></svg></Task>
        <Task $w={34}><svg width="15" height="13" viewBox="0 0 15 13"><path d="M.5.800h5l1.200 1.500H14v10H.5z" fill="#f4d675" /><path d="M3 12.500V7h9v5.500H9.800V9.500H5.200v3z" fill="#3da7d8" /></svg></Task>
        <Task $w={32} $active $run><svg width="16" height="16" viewBox="0 0 16 16"><circle cx="8" cy="8" r="7.5" fill="#e0443a" /><path d="M8 8L1.400 4.400A7.500 7.500 0 0 0 7.500 15.500L11.300 9.800z" fill="#2f9f52" /><path d="M8 4.500h6.700A7.500 7.500 0 0 1 7.500 15.500L11 9.800z" fill="#f8cd3a" /><circle cx="8" cy="8" r="3.5" fill="#fff" /><circle cx="8" cy="8" r="2.8" fill="#4284f0" /></svg></Task>
        <Task $w={32} $run><svg width="16" height="16" viewBox="0 0 16 16"><circle cx="8" cy="8" r="7.8" fill="#22cf60" /><path d="M3.300 5.600c3.300-1 6.800-.7 9.600.9M3.800 8.300c2.800-.9 5.800-.5 8.200.9M4.400 10.700c2.300-.7 4.700-.3 6.600.8" fill="none" stroke="#0a2b18" strokeWidth="1.3" strokeLinecap="round" /></svg></Task>
        <Tray>
          <Slot $w={27}><svg width="11" height="12" viewBox="0 0 11 12"><circle cx="7.5" cy="2.5" r="1.7" fill="none" stroke="#ddd" /><path d="M5.500 8c0-4 4.500-4 4.500 0M1 11.500c0-4 4.500-4 4.500 0" fill="none" stroke="#ddd" /><circle cx="3.2" cy="6.5" r="1.5" fill="none" stroke="#ddd" /></svg></Slot>
          <Slot $w={26}><svg width="9" height="6" viewBox="0 0 9 6"><path d="M.7 5l3.800-4 3.800 4" fill="none" stroke="#eee" strokeWidth="1.1" /></svg></Slot>
          <Slot $w={17}><svg width="12" height="8" viewBox="0 0 12 8"><path d="M3 7.500C0 7.500 0 4 2.500 4 3 .8 7 .4 8.300 2.800c3-.3 3.800 4.700.7 4.700z" fill="#f0f0f0" /></svg></Slot>
          <Slot $w={26}><svg width="12" height="10" viewBox="0 0 12 10"><path d="M4 2h7.300v5.200H4.500M6 9.300h4M.5.800v2.500h2.500V.8M1.700 3.300v6h2" fill="none" stroke="#ddd" strokeWidth=".9" /></svg></Slot>
          <Slot $w={17}><svg width="12" height="9" viewBox="0 0 12 9"><path d="M.6 3h1.800L5 .8v7.400L2.400 6H.6zM6.500 3c.8.8.8 2.200 0 3" fill="none" stroke="#eee" strokeWidth=".9" /><path d="M8 1.800c1.500 1.500 1.500 3.900 0 5.400M9.600.6c2 2.200 2 5.600 0 7.800" fill="none" stroke="#999" strokeWidth=".8" /></svg></Slot>
          <Clock>10:58 AM<br />10/11/2019</Clock>
          <Slot $w={20}><svg width="11" height="10" viewBox="0 0 11 10"><path d="M0 0h11v8H5l-2 2V8H0z" fill="#fff" /><path d="M2 2.500h7M2 4.300h7M2 6h4" stroke="#03161b" strokeWidth=".8" /></svg><CountBadge>1</CountBadge></Slot>
          <ShowDesktop />
        </Tray>
      </Taskbar>

      <Recorder>
        <Round $s={17}><svg width="9" height="3" viewBox="0 0 9 3"><path d="M.5 1.500h8" stroke="#777" strokeWidth="1.3" strokeDasharray="2 1" /></svg></Round>
        <Round $s={27}><svg width="14" height="11" viewBox="0 0 14 11"><path d="M.6.800h8.800v9.400H.6zM9.400 4l3.800-2v7L9.400 7M5 3.500v4M3 5.500h4" fill="none" stroke="#8d8f94" strokeWidth="1.1" /></svg></Round>
        <Round $s={27}><svg width="10" height="10" viewBox="0 0 10 10"><path d="M.8.800l8.400 8.400M9.200.800L.8 9.200" stroke="#eb9a96" strokeWidth="1.3" /></svg></Round>
        <Round $s={27}><svg width="8" height="11" viewBox="0 0 8 11"><path d="M1.500 0v11M6.500 0v11" stroke="#8d8f94" strokeWidth="1.7" /></svg></Round>
        <Round $s={27} $go><svg width="12" height="9" viewBox="0 0 12 9"><path d="M1 4.500L4.300 7.800 11 1" fill="none" stroke="#fff" strokeWidth="1.4" /></svg></Round>
      </Recorder>
    </Screen>
  );
}
